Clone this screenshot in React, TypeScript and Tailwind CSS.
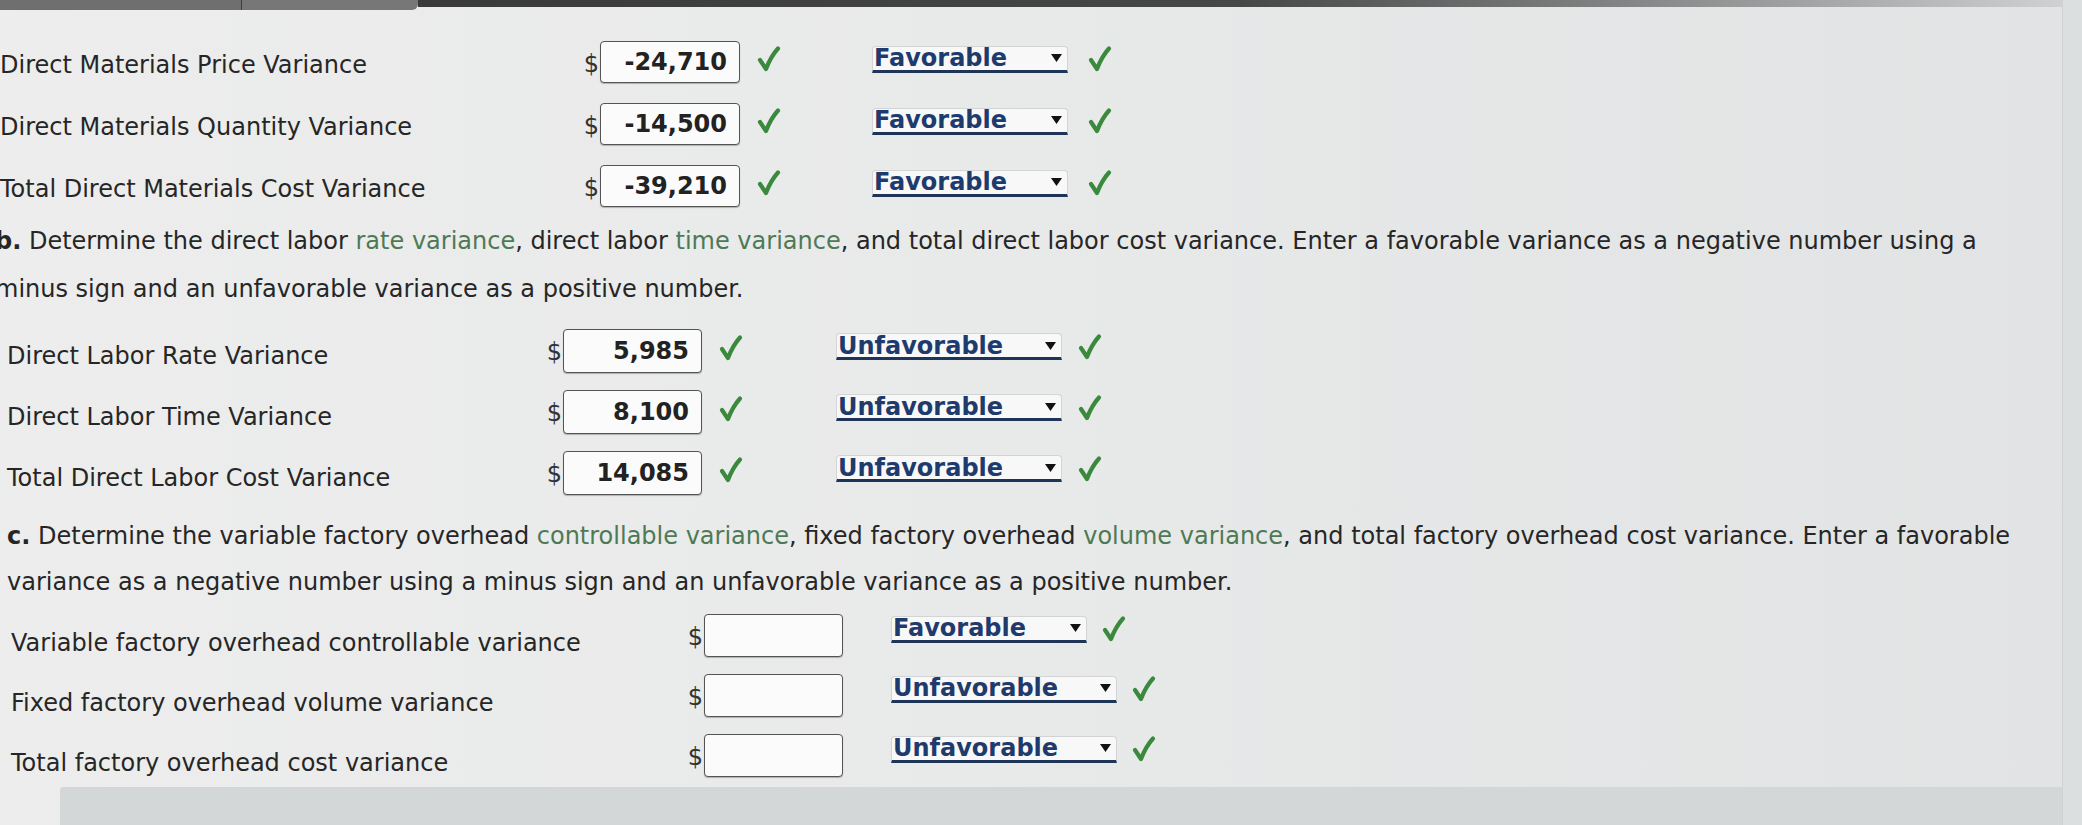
import type { ReactNode } from 'react';

type Row = {
  label: string;
  value: string;
  result: 'Favorable' | 'Unfavorable';
};

type Layout = {
  rowClass: string;
  labelClass: string;
  dollarClass: string;
  boxClass: string;
  boxCheck: boolean;
  selectGap: string;
  selectClass: string;
  checkGap: string;
};

const materialsRows: Row[] = [
  { label: 'Direct Materials Price Variance', value: '-24,710', result: 'Favorable' },
  { label: 'Direct Materials Quantity Variance', value: '-14,500', result: 'Favorable' },
  { label: 'Total Direct Materials Cost Variance', value: '-39,210', result: 'Favorable' },
];

const laborRows: Row[] = [
  { label: 'Direct Labor Rate Variance', value: '5,985', result: 'Unfavorable' },
  { label: 'Direct Labor Time Variance', value: '8,100', result: 'Unfavorable' },
  { label: 'Total Direct Labor Cost Variance', value: '14,085', result: 'Unfavorable' },
];

const overheadRows: Row[] = [
  { label: 'Variable factory overhead controllable variance', value: '', result: 'Favorable' },
  { label: 'Fixed factory overhead volume variance', value: '', result: 'Unfavorable' },
  { label: 'Total factory overhead cost variance', value: '', result: 'Unfavorable' },
];

const materialsLayout: Layout = {
  rowClass: 'h-[62px]',
  labelClass: 'w-[577px] pt-[5px]',
  dollarClass: 'w-[23px]',
  boxClass: 'w-[140px] h-[42px]',
  boxCheck: true,
  selectGap: 'ml-[91px]',
  selectClass: 'mb-[6px]',
  checkGap: 'ml-[19px]',
};

const laborLayout: Layout = {
  rowClass: 'h-[61px] pl-[7px]',
  labelClass: 'w-[534px] pt-[10px]',
  dollarClass: 'w-[22px]',
  boxClass: 'w-[139px] h-[44px]',
  boxCheck: true,
  selectGap: 'ml-[93px]',
  selectClass: 'mb-[8px]',
  checkGap: 'ml-[15px]',
};

const overheadLayout: Layout = {
  rowClass: 'h-[60px] pl-[11px]',
  labelClass: 'w-[674px] pt-[16px]',
  dollarClass: 'w-[19px]',
  boxClass: 'w-[139px] h-[43px]',
  boxCheck: false,
  selectGap: 'ml-[48px]',
  selectClass: 'mb-[12px]',
  checkGap: 'ml-[14px]',
};

function Check({ className = '' }: { className?: string }) {
  return (
    <svg
      className={`h-[28px] w-[25px] flex-none ${className}`}
      viewBox="0 0 25 28"
      fill="none"
    >
      <path
        d="M4 15 L10 24 C13 16 17 9 22 3.5"
        stroke="#3a893c"
        strokeWidth="4.2"
        strokeLinecap="round"
        strokeLinejoin="round"
      />
    </svg>
  );
}

function Dropdown({ value, className = '' }: { value: Row['result']; className?: string }) {
  const width = value === 'Favorable' ? 'w-[196px]' : 'w-[226px]';
  return (
    <div
      className={`flex h-[27px] flex-none items-center justify-between rounded-t-[4px] border border-b-[3px] border-[#d2d4d6] border-b-[#1f3557] bg-[#f8f8f8] pl-[1px] pr-[5px] ${width} ${className}`}
    >
      <span className="text-[24px] font-bold leading-none text-[#1f3b6d]">{value}</span>
      <svg className="h-[8px] w-[11px]" viewBox="0 0 11 8">
        <path d="M0 0 H11 L5.5 8 Z" fill="#111" />
      </svg>
    </div>
  );
}

function AmountBox({ value, className }: { value: string; className: string }) {
  return (
    <div
      className={`flex flex-none items-center justify-end rounded-[4px] border-[1.5px] border-[#545454] bg-[#fbfbfb] pr-[12px] shadow-[0_1px_1px_rgba(0,0,0,0.25)] ${className}`}
    >
      <span className="text-[24px] font-bold text-[#222]">{value}</span>
    </div>
  );
}

function VarianceRows({ rows, layout }: { rows: Row[]; layout: Layout }) {
  return (
    <div className="flex flex-col">
      {rows.map((row) => (
        <div className={`flex items-center ${layout.rowClass}`} key={row.label}>
          <span className={`flex-none whitespace-nowrap ${layout.labelClass}`}>{row.label}</span>
          <span
            className={`flex-none pr-[1px] pt-[3px] text-right text-[24px] text-[#333] ${layout.dollarClass}`}
          >
            $
          </span>
          <AmountBox value={row.value} className={layout.boxClass} />
          {layout.boxCheck && <Check className="mb-[6px] ml-[16px]" />}
          <Dropdown value={row.result} className={`${layout.selectGap} ${layout.selectClass}`} />
          <Check className={`${layout.checkGap} ${layout.selectClass}`} />
        </div>
      ))}
    </div>
  );
}

function Term({ children }: { children: ReactNode }) {
  return <span className="text-[#4d7a55]">{children}</span>;
}

export default function App() {
  return (
    <div
      className="flex h-[825px] w-[2082px] overflow-hidden bg-gradient-to-r from-[#ededed] via-[#e8e9e9] to-[#e1e3e4] text-[24px] text-[#262626]"
      style={{ fontFamily: '"DejaVu Sans", Verdana, sans-serif' }}
    >
      <div className="flex min-w-0 flex-1 flex-col">
        <div className="flex h-[10px] flex-none">
          <div className="w-[242px] border-r border-[#3e3e3e] bg-[#6f6f6f]" />
          <div className="w-[176px] rounded-br-[6px] bg-[#777777]" />
          <div className="h-[7px] flex-1 bg-gradient-to-r from-[#3a3a3a] via-[#474747] to-[#cfd1d2]" />
        </div>

        <div className="flex-1 pt-[21px]">
          <VarianceRows rows={materialsRows} layout={materialsLayout} />

          <p className="-ml-[5px] leading-[48px]">
            <span className="block whitespace-nowrap">
              <span className="font-bold">b.</span> Determine the direct labor <Term>rate variance</Term>,
              direct labor <Term>time variance</Term>, and total direct labor cost variance. Enter a
              favorable variance as a negative number using a
            </span>
            <span className="block whitespace-nowrap">
              minus sign and an unfavorable variance as a positive number.
            </span>
          </p>

          <div className="mt-[7px]">
            <VarianceRows rows={laborRows} layout={laborLayout} />
          </div>

          <p className="mt-[10px] pl-[7px] leading-[46px]">
            <span className="block whitespace-nowrap">
              <span className="font-bold">c.</span> Determine the variable factory overhead{' '}
              <Term>controllable variance</Term>, fixed factory overhead <Term>volume variance</Term>,
              and total factory overhead cost variance. Enter a favorable
            </span>
            <span className="block whitespace-nowrap">
              variance as a negative number using a minus sign and an unfavorable variance as a
              positive number.
            </span>
          </p>

          <VarianceRows rows={overheadRows} layout={overheadLayout} />
        </div>

        <div className="ml-[60px] h-[38px] flex-none rounded-tl-[4px] bg-[#d3d7d8]" />
      </div>
      <div className="w-[20px] flex-none border-l border-[#cfd2d3] bg-[#dcdfe0]" />
    </div>
  );
}
